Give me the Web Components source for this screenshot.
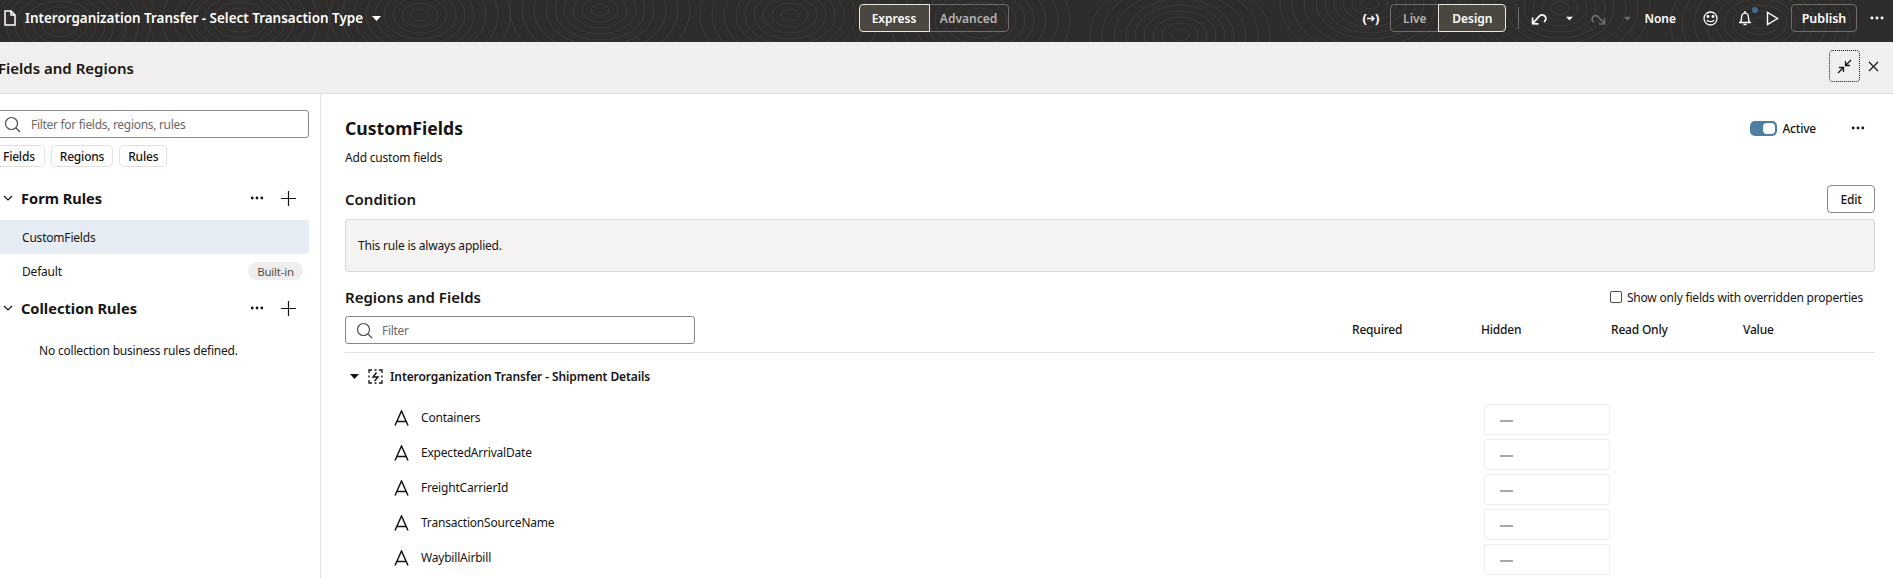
<!DOCTYPE html>
<html><head><meta charset="utf-8"><style>
html,body{margin:0;padding:0;height:100%;overflow:hidden;background:#fff}
body{font-family:"Noto Sans","Open Sans",sans-serif;color:#161513;width:1893px;height:578px;display:flex;flex-direction:column}
</style></head><body>
<app-bar></app-bar>
<panel-head></panel-head>
<div style="display:flex;flex:1;min-height:0">
<rules-side></rules-side>
<rule-main></rule-main>
</div>
<script>
const DOTS=`<svg width="14" height="4" viewBox="0 0 16 4" fill="currentColor"><circle cx="2.5" cy="2" r="1.6"/><circle cx="8" cy="2" r="1.6"/><circle cx="13.5" cy="2" r="1.6"/></svg>`;
const CARET=`<svg width="9" height="5" viewBox="0 0 9 5" fill="currentColor"><path d="M0 0h9L4.5 5z"/></svg>`;
const SEARCH=`<svg width="17" height="17" viewBox="0 0 17 17" fill="none" stroke="#4f4d4a" stroke-width="1.2"><circle cx="7.5" cy="7.5" r="6"/><path d="M12 12l4 4"/></svg>`;
const CHEV=`<svg width="10" height="6" viewBox="0 0 10 6" fill="none" stroke="#161513" stroke-width="1.2"><path d="M1 1l4 4 4-4"/></svg>`;
const PLUS=`<svg width="15" height="15" viewBox="0 0 15 15" fill="none" stroke="#161513" stroke-width="1.2"><path d="M7.5 0v15M0 7.5h15"/></svg>`;
const BODY=`font-size:12px;letter-spacing:-.2px;`;
function def(name,css,html){customElements.define(name,class extends HTMLElement{constructor(){super();this.attachShadow({mode:'open'}).innerHTML=`<style>${css}</style>`+(typeof html==='function'?html(this):html)}})}

def('seg-toggle',`:host{display:inline-flex;height:28px;box-sizing:border-box}
.b{display:flex;align-items:center;justify-content:center;box-sizing:border-box;height:28px;font:600 12px "Noto Sans",sans-serif;color:#b5b3b0;border:1px solid #6f6e6c}
.on{background:#4b4740;color:#fff;border-color:#e9e7e3;position:relative}
.l{border-radius:4px 0 0 4px}.r{border-radius:0 4px 4px 0}`,
h=>{const [a,wa,b,wb,on]=h.getAttribute('v').split(',');return `<div class="b l ${on==0?'on':''}" style="width:${wa}px">${a}</div><div class="b r ${on==1?'on':''}" style="width:${wb}px;margin-left:-1px">${b}</div>`});

def('app-bar',`:host{display:block;height:42px;background:#2f2d2b;color:#fff;flex:none;position:relative;overflow:hidden}
.tex{position:absolute;inset:0}
.row{position:relative;display:grid;grid-template-columns:1fr auto 1fr;align-items:center;width:100%;height:42px;padding-bottom:6px;box-sizing:border-box}
.left{display:flex;align-items:center;padding-left:3px}
.t{font-weight:600;font-size:13.45px;margin-left:8px;white-space:nowrap}
.right{display:flex;align-items:center;justify-content:flex-end}
.n{font-weight:600;font-size:12px}
.pub{display:flex;align-items:center;justify-content:center;box-sizing:border-box;width:66px;height:28px;border:1px solid #6f6e6c;border-radius:4px;font-weight:600;font-size:12.5px}
svg{display:block;flex:none}`,`
<svg class="tex" width="1893" height="42" stroke="#3d3b39" fill="none" stroke-width="1">
${[60,240,420,600,790,980,1180,1370,1560,1760].map(x=>[6,12,18,24,30,36,44,52,60].map(r=>`<ellipse cx="${x}" cy="${(x%37)+2}" rx="${r*1.5}" ry="${r}"/>`).join('')).join('')}
</svg>
<div class="row">
<div class="left">
<svg width="14" height="16" viewBox="0 0 14 16" fill="none" stroke="#fff" stroke-width="1.5"><path d="M2 1h6l4 4v10H2zM8 1v4h4"/></svg>
<span class="t">Interorganization Transfer - Select Transaction Type</span>
<span style="margin-left:9px;display:flex">${CARET}</span>
</div>
<seg-toggle style="margin-right:26px" v="Express,71,Advanced,80,0"></seg-toggle>
<div class="right">
<span style="font:700 13px 'Noto Sans',sans-serif;margin-right:11px;white-space:nowrap">(<svg style="display:inline-block;vertical-align:1px" width="8" height="7" viewBox="0 0 8 7" fill="none" stroke="#fff" stroke-width="1.4"><path d="M0 3.5h7M4.5 1l2.5 2.5L4.5 6"/></svg>)</span>
<seg-toggle v="Live,49,Design,68,1"></seg-toggle>
<span style="width:1px;height:22px;background:#6f6e6c;margin:0 12px"></span>
<svg width="16" height="14" viewBox="0 0 15 13" fill="none" stroke="#fff" stroke-width="1.6"><path d="M7 12l-5.500-.2V6M1.700 11.500L8 4.500c2-1.600 5-.8 5.800 1.600.4 1.600-.3 3-1.500 4"/></svg>
<span style="margin-left:18px;display:flex;transform:scale(.8)">${CARET}</span>
<svg style="margin-left:17px" width="15" height="13" viewBox="0 0 15 13" fill="none" stroke="#6f6e6c" stroke-width="1.6"><path d="M8 12l5.500-.2V6M13.300 11.500L7 4.500C5 2.900 2 3.700 1.200 6.100c-.4 1.600.3 3 1.500 4"/></svg>
<span style="margin-left:17px;display:flex;transform:scale(.8);color:#6f6e6c">${CARET}</span>
<span class="n" style="margin-left:12px;margin-top:1px">None</span>
<svg style="margin-left:27px" width="15" height="15" viewBox="0 0 15 15" fill="none" stroke="#fff" stroke-width="1.3"><circle cx="7.500" cy="7.500" r="6.500"/><path d="M4 9c.8 2.200 6.200 2.200 7 0"/><circle cx="5" cy="5.500" r=".8" fill="#fff"/><circle cx="10" cy="5.500" r=".8" fill="#fff"/></svg>
<span style="position:relative;margin-left:20px;display:block">
<svg width="14" height="16" viewBox="0 0 14 16" fill="none" stroke="#fff" stroke-width="1.4"><path d="M1 12.500h12M2.500 12.500c1-1.500 1-3 1-5 0-2.500 1.500-4.500 3.500-4.500s3.500 2 3.500 4.500c0 2 0 3.500 1 5M7 1v2M5.500 14.500h3"/></svg>
<span style="position:absolute;left:14px;top:-3px;width:6px;height:6px;border-radius:50%;background:#3f6b94"></span>
</span>
<svg style="margin-left:14px" width="13" height="15" viewBox="0 0 13 15" fill="none" stroke="#fff" stroke-width="1.4"><path d="M1.500 1.500v12l10-6z"/></svg>
<div class="pub" style="margin-left:12px">Publish</div>
<span style="margin:0 9px 0 13px;display:flex;transform:scale(1.05)">${DOTS}</span>
</div></div>`);

def('panel-head',`:host{display:flex;align-items:center;justify-content:space-between;box-sizing:border-box;height:52px;background:#f1efed;border-bottom:1px solid #dedcd9;flex:none}
.t{font-weight:600;font-size:15px;margin-left:-2px}
.x{display:flex;align-items:center;margin:-3px 14px 0 0}
.f{display:flex;align-items:center;justify-content:center;box-sizing:border-box;width:31px;height:32px;border:1px dotted #161513;border-radius:4px}`,`
<div class="t">Fields and Regions</div>
<div class="x"><div class="f"><svg width="15" height="15" viewBox="0 0 15 15" fill="none" stroke="#161513" stroke-width="1.3"><path d="M14 1L8.500 6.500M8.500 2v4.500H13M1 14l5.500-5.500M2 8.500h4.500V13"/></svg></div>
<svg style="margin-left:8px" width="11" height="11" viewBox="0 0 11 11" fill="none" stroke="#161513" stroke-width="1.200"><path d="M1 1l9 9M10 1l-9 9"/></svg></div>`);

def('search-box',`:host{display:flex;align-items:center;box-sizing:border-box;height:28px;border:1px solid #8a8886;border-radius:3px;font-size:12px;letter-spacing:-.3px;color:#6b6967}
svg{display:block;flex:none}`,h=>`${SEARCH}<span style="margin-left:${h.getAttribute('g')}px">${h.getAttribute('p')}</span>`);

def('chip-btn',`:host{display:flex;align-items:center;box-sizing:border-box;height:22px;border:1px solid #e4e2df;border-radius:5px;${BODY}font-weight:500;color:#161513}`,`<slot></slot>`);

def('rule-group',`:host{display:flex;align-items:center;height:32px;box-sizing:border-box;padding-left:3px}
.t{font-weight:700;font-size:14.6px;margin-left:8px;flex:1}
svg{display:block;flex:none}`,h=>`${CHEV}<span class="t">${h.getAttribute('t')}</span><span style="margin-right:17px;display:flex">${DOTS}</span><span style="margin-right:24px;display:flex">${PLUS}</span>`);

def('rules-side',`:host{display:block;box-sizing:border-box;width:321px;height:100%;border-right:1px solid #e4e2df;flex:none;padding-top:16px;overflow:hidden}
search-box{margin:0 11px 0 -6px;padding-left:9px}
.chips{display:flex;gap:6px;margin:7px 0 0 -7px}
.row{display:flex;align-items:center;height:34px;${BODY}margin-right:11px;padding-left:22px;box-sizing:border-box;justify-content:space-between}
.sel{background:#e6ecf3;border-radius:0 3px 3px 0}
.b{display:flex;align-items:center;height:18px;padding:0 9px;border-radius:9px;background:#f0eeec;font-size:11.5px;color:#4f4d4a;margin-right:6px}
.none{${BODY}padding-left:39px;margin-top:18px}`,`
<search-box p="Filter for fields, regions, rules" g="10"></search-box>
<div class="chips"><chip-btn style="padding:0 9px 0 9px">Fields</chip-btn><chip-btn style="padding:0 8px">Regions</chip-btn><chip-btn style="padding:0 8px">Rules</chip-btn></div>
<rule-group t="Form Rules" style="margin-top:15px"></rule-group>
<div class="row sel" style="margin-top:6px">CustomFields</div>
<div class="row">Default<span class="b">Built-in</span></div>
<rule-group t="Collection Rules" style="margin-top:4px"></rule-group>
<div class="none">No collection business rules defined.</div>`);

def('field-row',`:host{display:flex;align-items:center;height:35px;${BODY}position:relative}
svg{display:block;flex:none;margin-left:49px}
span{margin-left:12px}
.v{position:absolute;left:1139px;top:4px;box-sizing:border-box;width:126px;height:31px;border:1px solid #f0eeec;border-radius:3px}
.v i{position:absolute;left:15px;top:15px;width:13px;height:1.5px;background:#a9a7a4}`,h=>`<svg width="15" height="16" viewBox="0 0 15 16" fill="none" stroke="#161513" stroke-width="1.5"><path d="M1 15.500L7.500 1 14 15.500M2.800 11.500h9.400"/></svg><span>${h.getAttribute('n')}</span><div class="v"><i></i></div>`);

def('rule-main',`:host{display:block;flex:1;min-width:0;box-sizing:border-box;padding:23px 0 0 24px;overflow:hidden;${BODY}}
.top{display:flex;align-items:center;justify-content:space-between;height:22px}
h1{margin:0;font-size:17.6px;font-weight:700;line-height:22px;letter-spacing:0}
.act{display:flex;align-items:center;margin-right:28px;font-weight:500}
.sw{position:relative;width:27px;height:15px;border-radius:5px;background:#4f7ea3;margin-right:5px;box-sizing:border-box}
.sw i{position:absolute;right:2px;top:2px;width:12px;height:11px;border-radius:4px;background:#fff}
.sub{margin-top:10px;line-height:18px}
.c{display:flex;align-items:center;justify-content:space-between;margin:18px 18px 0 0;height:28px}
h2{margin:0;font-size:15px;font-weight:600;letter-spacing:0}
.edit{display:flex;align-items:center;justify-content:center;box-sizing:border-box;width:48px;height:28px;border:1px solid #8a8886;border-radius:4px;font-weight:500}
.box{box-sizing:border-box;height:53px;margin:6px 18px 0 0;background:#f4f3f1;border:1px solid #d9d7d4;border-radius:3px;display:flex;align-items:center;padding-left:12px}
.r2{display:flex;align-items:center;justify-content:space-between;margin:15px 18px 0 0;height:20px}
.chk{display:flex;align-items:center;margin-right:12px}
.chk i{display:block;width:10px;height:10px;border:1.500px solid #4f4d4a;border-radius:2px;margin-right:5px}
.r3{display:flex;align-items:center;height:28px;margin:9px 18px 0 0}
search-box{width:350px;padding-left:10px}
.cols{position:relative;flex:1;height:28px;font-weight:500}
.cols span{position:absolute;top:5px;white-space:nowrap}
.rule{height:1px;background:#e4e2df;margin:8px 18px 0 0}
.reg{display:flex;align-items:center;height:22px;margin-top:12px;padding-left:5px}
.reg b{font-weight:600;margin-left:7px;letter-spacing:-.1px}
svg{display:block;flex:none}`,`
<div class="top"><h1>CustomFields</h1><div class="act"><div class="sw"><i></i></div>Active<span style="margin-left:35px;display:flex">${DOTS}</span></div></div>
<div class="sub">Add custom fields</div>
<div class="c"><h2>Condition</h2><div class="edit">Edit</div></div>
<div class="box">This rule is always applied.</div>
<div class="r2"><h2>Regions and Fields</h2><div class="chk"><i></i>Show only fields with overridden properties</div></div>
<div class="r3"><search-box p="Filter" g="9"></search-box><div class="cols"><span style="left:657px">Required</span><span style="left:786px">Hidden</span><span style="left:916px">Read Only</span><span style="left:1048px">Value</span></div></div>
<div class="rule"></div>
<div class="reg">${CARET}<svg style="margin-left:9px" width="15" height="15" viewBox="0 0 15 15" fill="none" stroke="#161513" stroke-width="1.300"><path d="M4 1H1v3M11 1h3v3M1 11v3h3M14 11v3h-3M1 6.500v2M14 6.500v2M6.500 1h2M6.500 14h2"/><path d="M8.500 3.500L5 8h5l-3.500 4" stroke-width="1.400"/></svg><b>Interorganization Transfer - Shipment Details</b></div>
<div style="margin-top:13px">
<field-row n="Containers"></field-row><field-row n="ExpectedArrivalDate"></field-row><field-row n="FreightCarrierId"></field-row><field-row n="TransactionSourceName"></field-row><field-row n="WaybillAirbill"></field-row>
</div>`);
</script>
</body></html>
